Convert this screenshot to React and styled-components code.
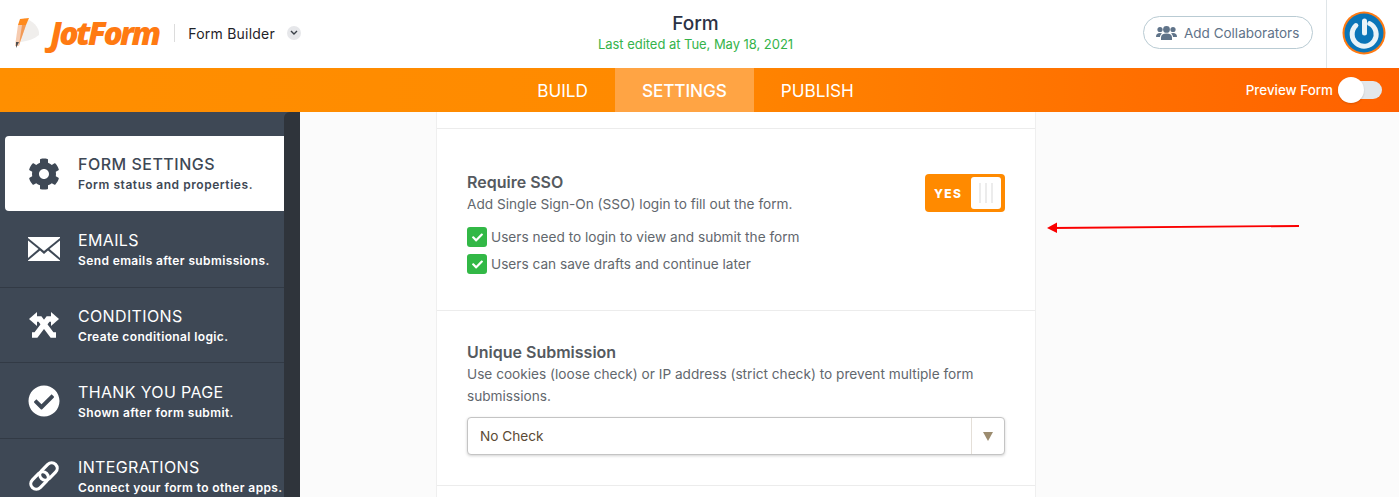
import React from 'react';
import styled, { createGlobalStyle } from 'styled-components';
import { FaCog, FaCheckCircle, FaCheck } from 'react-icons/fa';

const GlobalStyle = createGlobalStyle`
  html, body { margin: 0; padding: 0; height: 497px; overflow: hidden; background: #fff; }
  body { font-family: Inter, "Noto Sans", sans-serif; }
  * { box-sizing: border-box; }
`;

const Page = styled.div`
  position: relative;
  width: 1399px;
  height: 497px;
  overflow: hidden;
  display: flex;
  flex-direction: column;
`;

const Header = styled.header`
  height: 68px;
  flex: none;
  display: grid;
  grid-template-columns: 1fr auto 1fr;
  padding-right: 8px;
  background: #fff;
`;

const Brand = styled.div`
  display: flex;
  align-items: center;
  padding: 0 0 2px 14px;
`;

const LogoText = styled.span`
  font-family: "Open Sans", sans-serif;
  font-size: 32px;
  font-weight: 800;
  font-style: italic;
  letter-spacing: -2.7px;
  color: #ff7a12;
  margin-left: 10px;
  line-height: 1;
`;

const BrandRule = styled.span`
  width: 1px;
  height: 18px;
  background: #dcdcdc;
  margin: 0 13px 0 16px;
`;

const BrandName = styled.span`
  font-size: 14px;
  color: #1f2329;
  letter-spacing: 0.22px;
`;

const Chevron = styled.span`
  width: 14px;
  height: 14px;
  margin-left: 12px;
  border-radius: 50%;
  background: #e6e7ea;
  display: flex;
  align-items: center;
  justify-content: center;
`;

const Title = styled.div`
  display: flex;
  flex-direction: column;
  align-items: center;
  padding-top: 13px;
`;

const FormName = styled.div`
  font-size: 19px;
  font-weight: 500;
  line-height: 22px;
  color: #2b3245;
`;

const LastEdited = styled.div`
  font-size: 13px;
  letter-spacing: -0.04px;
  line-height: 18px;
  color: #35b34a;
`;

const HeaderRight = styled.div`
  display: flex;
  justify-content: flex-end;
  align-items: stretch;
  margin-right: 5px;
`;

const CollabButton = styled.div`
  align-self: flex-start;
  margin-top: 16px;
  width: 170px;
  height: 33px;
  border: 1px solid #b9cbd3;
  border-radius: 17px;
  padding-left: 12px;
  display: flex;
  align-items: center;
  gap: 7px;
  font-size: 13.5px;
  color: #5f7389;
`;

const AvatarCell = styled.div`
  width: 60px;
  margin-left: 13px;
  border-left: 1px solid #dfe5e8;
  display: flex;
  padding: 11px 0 0 15px;
`;

const NavBar = styled.nav`
  height: 44px;
  flex: none;
  display: grid;
  grid-template-columns: 1fr auto 1fr;
  padding-right: 8px;
  background: linear-gradient(90deg, #ff8f00 0%, #ff8a00 45%, #ff6100 100%);
`;

const Tabs = styled.div`
  display: flex;
`;

const Tab = styled.div`
  padding: 0 27px;
  display: flex;
  align-items: center;
  font-size: 17.2px;
  color: #fff;
  font-weight: ${p => (p.$active ? 500 : 400)};
  letter-spacing: ${p => (p.$active ? '-0.1px' : '0')};
  background: ${p => (p.$active ? '#ffa444' : 'transparent')};
`;

const Preview = styled.div`
  display: flex;
  align-items: center;
  justify-content: flex-end;
  padding-right: 9px;
  gap: 5px;
  font-size: 13.4px;
  font-weight: 500;
  color: #fff;
`;

const PreviewTrack = styled.div`
  width: 44px;
  height: 18px;
  border-radius: 9px;
  background: #e3e7ea;
  position: relative;
`;

const PreviewKnob = styled.div`
  position: absolute;
  left: 0;
  top: -4px;
  width: 26px;
  height: 26px;
  border-radius: 50%;
  background: #fff;
  box-shadow: 0 1px 2px rgba(0, 0, 0, 0.15);
`;

const Body = styled.div`
  flex: 1;
  min-height: 0;
  display: flex;
  background: #fbfbfb;
`;

const Sidebar = styled.aside`
  width: 300px;
  flex: none;
  display: flex;
  background: #3e4855;
`;

const SideList = styled.div`
  width: 284px;
  padding-top: 24px;
`;

const Scrollbar = styled.div`
  width: 16px;
  background: #2f343b;
  border-radius: 6px 0 0 0;
`;

const SideItem = styled.div`
  height: ${p => p.$height || 75}px;
  margin-left: ${p => (p.$active ? 5 : 0)}px;
  padding-left: ${p => (p.$active ? 23 : 28)}px;
  display: flex;
  align-items: center;
  gap: 18px;
  color: ${p => (p.$active ? '#3e4855' : '#fff')};
  background: ${p => (p.$active ? '#fff' : 'transparent')};
  border-radius: ${p => (p.$active ? '4px 0 0 4px' : '0')};
  border-bottom: ${p => (p.$active || p.$plain ? 'none' : '1px solid #323a45')};
`;

const SideIcon = styled.div`
  width: 32px;
  flex: none;
  display: flex;
  justify-content: center;
`;

const SideText = styled.div`
  white-space: nowrap;
  padding-top: ${p => (p.$active ? 0 : 1)}px;
`;

const SideTitle = styled.div`
  font-size: 16px;
  line-height: 20px;
  letter-spacing: ${p => (p.$active ? 0.5 : 0.35)}px;
  font-weight: ${p => (p.$active ? 500 : 400)};
`;

const SideSub = styled.div`
  margin-top: 2px;
  font-size: 12px;
  line-height: 17px;
  font-weight: 600;
  letter-spacing: ${p => (p.$active ? 0.55 : 0.38)}px;
`;

const Content = styled.main`
  flex: 1;
  display: flex;
  padding-left: 136px;
`;

const Card = styled.div`
  width: 600px;
  background: #fff;
  border-left: 1px solid #efefef;
  border-right: 1px solid #efefef;
`;

const Section = styled.section`
  height: ${p => p.$height}px;
  padding: ${p => p.$top || 0}px 30px 0;
  border-bottom: 1px solid #ececec;
`;

const SsoRow = styled.div`
  display: flex;
  justify-content: space-between;
  align-items: flex-start;
`;

const Label = styled.div`
  font-size: 16px;
  line-height: 20px;
  margin-bottom: 1px;
  font-weight: 600;
  color: #555a60;
`;

const Description = styled.div`
  font-size: 13.65px;
  line-height: 22px;
  color: #62676d;
`;

const Toggle = styled.div`
  width: 80px;
  height: 38px;
  margin-top: 2px;
  padding: 3px 4px 3px 9px;
  border-radius: 4px;
  background: #ff8a00;
  display: flex;
  align-items: center;
  justify-content: space-between;
  font-size: 12px;
  font-weight: 800;
  letter-spacing: 1.3px;
  color: #fff;
`;

const ToggleKnob = styled.div`
  width: 30px;
  height: 32px;
  border-radius: 3px;
  background: #fff;
  display: flex;
  align-items: center;
  justify-content: center;
  gap: 4px;
`;

const KnobLine = styled.span`
  width: 2px;
  height: 20px;
  background: #ececec;
`;

const Checks = styled.div`
  margin-top: 12px;
  display: flex;
  flex-direction: column;
  gap: 7px;
`;

const CheckRow = styled.div`
  display: flex;
  align-items: center;
  gap: 4px;
  font-size: 13.65px;
  color: #62676d;
`;

const CheckBox = styled.span`
  width: 20px;
  height: 20px;
  border-radius: 3px;
  background: #32b846;
  color: #fff;
  display: flex;
  align-items: center;
  justify-content: center;
`;

const Select = styled.div`
  margin-top: 10px;
  height: 38px;
  border: 1px solid #c4c4c4;
  border-radius: 4px;
  box-shadow: 0 1px 3px rgba(0, 0, 0, 0.18);
  display: flex;
  align-items: center;
  justify-content: space-between;
  padding-left: 12px;
  font-size: 13.65px;
  color: #5b4a35;
  background: #fff;
`;

const SelectArrow = styled.div`
  width: 33px;
  height: 100%;
  border-left: 1px solid #e4dfd8;
  display: flex;
  align-items: center;
  justify-content: center;
  &::after {
    content: '';
    border-left: 5px solid transparent;
    border-right: 5px solid transparent;
    border-top: 9px solid #9c8c6f;
    margin-top: 1px;
  }
`;

const Annotation = styled.svg`
  position: absolute;
  left: 1040px;
  top: 218px;
`;

const PencilLogo = () => (
  <svg width="26" height="32" viewBox="0 0 26 32">
    <path d="M10 1 C18 3 26 10 25 18 C20 22 14 24 7 25 Z" fill="#f0eeec" />
    <path d="M6 2 L15 1 L12 8 L4 8 Z" fill="#ff8a1c" />
    <path d="M4 8 L12 8 L5 29 L1 29 Z" fill="#f6cbb0" />
    <path d="M8 8 L12 8 L5 28 Z" fill="#f29a55" />
    <path d="M2 25 L5 25 L2 31 Z" fill="#4e4e4e" />
  </svg>
);

const ChevronIcon = () => (
  <svg width="8" height="6" viewBox="0 0 8 6">
    <path d="M1 1 L4 4 L7 1" fill="none" stroke="#3a4048" strokeWidth="1.4" />
  </svg>
);

const PowerAvatar = () => (
  <svg width="44" height="44" viewBox="0 0 44 44">
    <circle cx="22" cy="22" r="21.5" fill="#ff7a12" />
    <circle cx="22" cy="22" r="19.5" fill="#0a75b8" />
    <path
      d="M15 13.5 A12 12 0 1 0 29 13.5"
      transform="rotate(-8 22 22)"
      fill="none"
      stroke="#e9f3f8"
      strokeWidth="5"
      strokeLinecap="round"
    />
    <path d="M22.5 10 V22" stroke="#e9f3f8" strokeWidth="5" strokeLinecap="round" />
  </svg>
);

const CollabIcon = () => (
  <svg width="21" height="14" viewBox="0 0 21 14" fill="#5f7389">
    <circle cx="4" cy="3.5" r="2.6" />
    <circle cx="17" cy="3.5" r="2.6" />
    <circle cx="10.5" cy="3.4" r="3.4" />
    <path d="M0 11 C0 8 1.5 7 4 7 C5 7 5.6 7.2 6 7.6 C4.6 8.6 4 10 4 11 Z" />
    <path d="M21 11 C21 8 19.5 7 17 7 C16 7 15.4 7.2 15 7.6 C16.4 8.6 17 10 17 11 Z" />
    <path d="M5 14 V11.5 C5 9 7 7.5 10.5 7.5 C14 7.5 16 9 16 11.5 V14 Z" />
  </svg>
);

const EnvelopeIcon = () => (
  <svg width="32" height="24" viewBox="0 0 32 24" fill="#fff">
    <path d="M0 1 L16 14 L32 1 V0 H0 Z" />
    <path d="M0 3.5 V21 L10.5 12 Z" />
    <path d="M32 3.5 V21 L21.5 12 Z" />
    <path d="M0 23.5 V24 H32 V23.5 L20 13.5 L16 17 L12 13.5 Z" />
  </svg>
);

const ConditionsIcon = () => (
  <svg width="30" height="26" viewBox="0 0 30 26" fill="#fff">
    <path d="M0 7 L8 0 V14 Z" />
    <path d="M30 7 L22 0 V14 Z" />
    <path d="M7 7 H11 L23 23 H27" fill="none" stroke="#fff" strokeWidth="5.5" />
    <path d="M23 7 H19 L7 23 H3" fill="none" stroke="#fff" strokeWidth="5.5" />
  </svg>
);

const LinkIcon = () => (
  <svg width="32" height="32" viewBox="0 0 32 32" fill="none" stroke="#fff" strokeWidth="3.2">
    <rect x="10.5" y="6" width="20" height="11" rx="5.5" transform="rotate(-45 20.5 11.5)" />
    <rect x="1.5" y="15" width="20" height="11" rx="5.5" transform="rotate(-45 11.5 20.5)" />
  </svg>
);

const menu = [
  { title: 'EMAILS', sub: 'Send emails after submissions.', icon: <EnvelopeIcon />, height: 77 },
  { title: 'CONDITIONS', sub: 'Create conditional logic.', icon: <ConditionsIcon />, height: 75 },
  { title: 'THANK YOU PAGE', sub: 'Shown after form submit.', icon: <FaCheckCircle size={32} />, height: 76 },
  { title: 'INTEGRATIONS', sub: 'Connect your form to other apps.', icon: <LinkIcon />, height: 73, plain: true },
];

export default function App() {
  return (
    <Page>
      <GlobalStyle />
      <Header>
        <Brand>
          <PencilLogo />
          <LogoText>JotForm</LogoText>
          <BrandRule />
          <BrandName>Form Builder</BrandName>
          <Chevron><ChevronIcon /></Chevron>
        </Brand>
        <Title>
          <FormName>Form</FormName>
          <LastEdited>Last edited at Tue, May 18, 2021</LastEdited>
        </Title>
        <HeaderRight>
          <CollabButton>
            <CollabIcon />
            Add Collaborators
          </CollabButton>
          <AvatarCell><PowerAvatar /></AvatarCell>
        </HeaderRight>
      </Header>

      <NavBar>
        <span />
        <Tabs>
          <Tab>BUILD</Tab>
          <Tab $active>SETTINGS</Tab>
          <Tab>PUBLISH</Tab>
        </Tabs>
        <Preview>
          Preview Form
          <PreviewTrack><PreviewKnob /></PreviewTrack>
        </Preview>
      </NavBar>

      <Body>
        <Sidebar>
          <SideList>
            <SideItem $active>
              <SideIcon><FaCog size={32} /></SideIcon>
              <SideText $active>
                <SideTitle $active>FORM SETTINGS</SideTitle>
                <SideSub $active>Form status and properties.</SideSub>
              </SideText>
            </SideItem>
            {menu.map(item => (
              <SideItem key={item.title} $height={item.height} $plain={item.plain}>
                <SideIcon>{item.icon}</SideIcon>
                <SideText>
                  <SideTitle>{item.title}</SideTitle>
                  <SideSub>{item.sub}</SideSub>
                </SideText>
              </SideItem>
            ))}
          </SideList>
          <Scrollbar />
        </Sidebar>

        <Content>
          <Card>
            <Section $height={17} />
            <Section $height={182} $top={43}>
              <SsoRow>
                <div>
                  <Label>Require SSO</Label>
                  <Description>Add Single Sign-On (SSO) login to fill out the form.</Description>
                </div>
                <Toggle>
                  YES
                  <ToggleKnob>
                    <KnobLine /><KnobLine /><KnobLine />
                  </ToggleKnob>
                </Toggle>
              </SsoRow>
              <Checks>
                <CheckRow><CheckBox><FaCheck size={11} /></CheckBox>Users need to login to view and submit the form</CheckRow>
                <CheckRow><CheckBox><FaCheck size={11} /></CheckBox>Users can save drafts and continue later</CheckRow>
              </Checks>
            </Section>
            <Section $height={175} $top={31}>
              <Label>Unique Submission</Label>
              <Description>Use cookies (loose check) or IP address (strict check) to prevent multiple form submissions.</Description>
              <Select>
                No Check
                <SelectArrow />
              </Select>
            </Section>
          </Card>
        </Content>
      </Body>

      <Annotation width="262" height="16" viewBox="0 0 262 16">
        <path d="M259 8 L12 10" stroke="#fa0000" strokeWidth="1.8" fill="none" />
        <path d="M7 10 L17 4.5 L17 15 Z" fill="#fa0000" />
      </Annotation>
    </Page>
  );
}
